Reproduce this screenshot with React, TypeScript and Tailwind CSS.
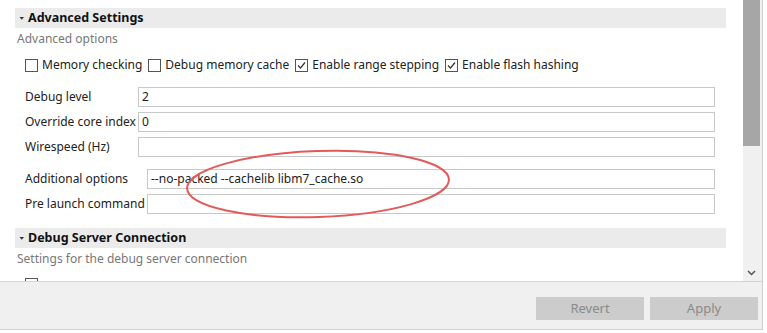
import React from "react";

const font = { fontFamily: '"Noto Sans", "Open Sans", sans-serif' };

function Checkbox({ label, checked }: { label: string; checked?: boolean }) {
  return (
    <label className="flex items-center gap-[4px]">
      <span className="flex h-[13px] w-[13px] items-center justify-center border border-[#555] bg-white">
        {checked && (
          <svg width="11" height="11" viewBox="0 0 11 11">
            <path d="M2 5.5 L4.5 8 L9 2.5" fill="none" stroke="#333" strokeWidth="1.2" />
          </svg>
        )}
      </span>
      <span className="text-[12px] text-[#222]">{label}</span>
    </label>
  );
}

function Field({ label, value, inputStart }: { label: string; value?: string; inputStart: string }) {
  return (
    <div className={`grid items-center ${inputStart} h-[20px]`}>
      <span className="pl-[10px] text-[12px] text-[#222] whitespace-nowrap">{label}</span>
      <div className="flex h-[20px] items-center border border-[#c8c8c8] bg-white px-[3px] text-[12px] text-[#222]">
        {value}
      </div>
    </div>
  );
}

function SectionHeader({ title }: { title: string }) {
  return (
    <div className="flex h-[20px] items-center bg-[#ebebeb] pl-[3px]">
      <svg width="8" height="9" viewBox="0 0 8 9" className="mr-[2px]">
        <path d="M1.5 3 L6 3 L3.75 5.8 Z" fill="#333" />
      </svg>
      <span className="text-[12.5px] font-bold text-[#111]">{title}</span>
    </div>
  );
}

export default function App() {
  return (
    <div className="relative h-[333px] w-[767px] bg-white" style={font}>
      <div className="flex h-[330px] w-[763px] flex-col border-r border-b border-[#cfcfcf]">
        <div className="flex h-[281px]">
          <div className="flex-1 overflow-hidden pl-[15px] pr-[17px] pt-[8px]">
            <SectionHeader title="Advanced Settings" />
            <div className="mt-[2px] pl-[2px] text-[12px] leading-[18px] text-[#777]">Advanced options</div>
            <div className="mt-[8px] flex items-center gap-[6px] pl-[10px]">
              <Checkbox label="Memory checking" />
              <Checkbox label="Debug memory cache" />
              <Checkbox label="Enable range stepping" checked />
              <Checkbox label="Enable flash hashing" checked />
            </div>
            <div className="mr-[11px] mt-[13px] flex flex-col gap-[5px]">
              <Field label="Debug level" value="2" inputStart="grid-cols-[123px_1fr]" />
              <Field label="Override core index" value="0" inputStart="grid-cols-[123px_1fr]" />
              <Field label="Wirespeed (Hz)" inputStart="grid-cols-[123px_1fr]" />
            </div>
            <div className="mr-[11px] mt-[12px] flex flex-col gap-[5px]">
              <Field label="Additional options" value="--no-packed --cachelib libm7_cache.so" inputStart="grid-cols-[132px_1fr]" />
              <Field label="Pre launch command" inputStart="grid-cols-[132px_1fr]" />
            </div>
            <div className="mt-[14px]">
              <SectionHeader title="Debug Server Connection" />
            </div>
            <div className="mt-[2px] pl-[2px] text-[12px] leading-[18px] text-[#777]">
              Settings for the debug server connection
            </div>
            <div className="mt-[10px] pl-[10px]">
              <span className="block h-[13px] w-[13px] border border-[#555]" />
            </div>
          </div>
          <div className="flex w-[17px] flex-col bg-[#f0f0f0]">
            <div className="h-[146px] bg-[#a6a6a6]" />
            <div className="flex-1" />
            <div className="flex h-[17px] items-center justify-center">
              <svg width="9" height="6" viewBox="0 0 9 6">
                <path d="M1 1 L4.5 4.5 L8 1" fill="none" stroke="#555" strokeWidth="1.5" />
              </svg>
            </div>
          </div>
          <div className="w-[2px] bg-[#f0f0f0]" />
        </div>
        <div className="flex flex-1 items-start justify-end gap-[6px] border-t border-[#d4d4d4] bg-[#f0f0f0] pr-[4px] pt-[15px]">
          <button className="h-[23px] w-[108px] bg-[#cccccc] text-[13px] text-[#8a8a8a]">Revert</button>
          <button className="h-[23px] w-[108px] bg-[#cccccc] text-[13px] text-[#8a8a8a]">Apply</button>
        </div>
      </div>
      <svg className="pointer-events-none absolute left-0 top-0" width="767" height="333">
        <ellipse cx="318" cy="184" rx="131" ry="33" fill="none" stroke="#e25b5b" strokeWidth="2" transform="rotate(-2 318 184)" />
      </svg>
    </div>
  );
}
